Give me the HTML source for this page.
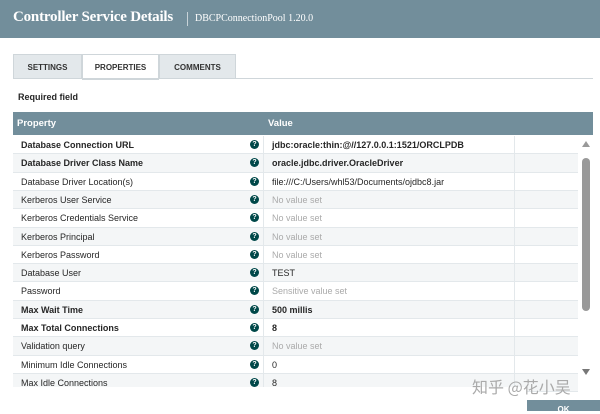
<!DOCTYPE html>
<html><head><style>
*{margin:0;padding:0;box-sizing:border-box}
body{width:600px;height:411px;overflow:hidden;background:#fff;font-family:"Liberation Sans",sans-serif;position:relative}
#hd{position:absolute;left:0;top:0;width:600px;height:38px;background:#728e9b;color:#fff}
#hd .t{position:absolute;left:13px;top:9px;font-family:"Liberation Serif",serif;font-weight:bold;font-size:15px;letter-spacing:-0.2px}
#hd .s{position:absolute;left:195px;top:13px;font-family:"Liberation Serif",serif;font-size:10px}
#hd .bar{position:absolute;left:187px;top:12px;width:1px;height:14px;background:#c8d3d8}
.tab{position:absolute;top:54px;height:25px;font-size:8px;font-weight:bold;color:#333;text-align:center;line-height:25px;background:#e3e8eb;border:1px solid #cfd6da}
#line{position:absolute;left:13px;top:78px;width:580px;height:1px;background:#cfd6da}
#rf{position:absolute;left:18px;top:92px;font-size:9px;font-weight:bold;color:#262626}
#th{position:absolute;left:13px;top:112px;width:580px;height:23px;background:#728e9b;color:#fff;font-size:9.5px;font-weight:bold}
.row{position:absolute;left:13px;width:565px;height:19px;border-bottom:1px solid #e3e8eb;font-size:9px;color:#262626}
.row span{position:absolute;top:4px}
.row .p{left:8px}.row .v{left:259px}
.row .q{left:237px;top:4px;width:9px;height:9px;border-radius:50%;background:#004849;color:#fff;font-size:7px;font-weight:bold;text-align:center;line-height:9px}
.row .d1{position:absolute;left:250px;top:0;width:1px;height:100%;background:#e3e8eb}
.row .d2{position:absolute;left:501px;top:0;width:1px;height:100%;background:#e3e8eb}
.b{font-weight:bold}.g{color:#aaa}
</style></head><body>
<div id="hd"><div class="t">Controller Service Details</div><div class="bar"></div><div class="s">DBCPConnectionPool 1.20.0</div></div>
<div class="tab" style="left:13px;width:69px">SETTINGS</div>
<div class="tab" style="left:82px;width:77px;background:#fff;height:26px">PROPERTIES</div>
<div class="tab" style="left:159px;width:77px">COMMENTS</div>
<div id="line"></div>
<div id="rf">Required field</div>
<div id="th"><span style="position:absolute;left:4px;top:6px">Property</span><span style="position:absolute;left:255px;top:6px">Value</span></div>
<div id="rows"></div>
<div style="position:absolute;left:582px;top:141px;width:0;height:0;border-left:4px solid transparent;border-right:4px solid transparent;border-bottom:6px solid #999"></div>
<div style="position:absolute;left:582px;top:158px;width:8px;height:153px;border-radius:4px;background:#999"></div>
<div style="position:absolute;left:582px;top:369px;width:0;height:0;border-left:4px solid transparent;border-right:4px solid transparent;border-top:6px solid #777"></div>
<script>
var d=[["Database Connection URL","jdbc:oracle:thin:@//127.0.0.1:1521/ORCLPDB",1,0],["Database Driver Class Name","oracle.jdbc.driver.OracleDriver",1,0],["Database Driver Location(s)","file:///C:/Users/whl53/Documents/ojdbc8.jar",0,0],["Kerberos User Service","No value set",0,1],["Kerberos Credentials Service","No value set",0,1],["Kerberos Principal","No value set",0,1],["Kerberos Password","No value set",0,1],["Database User","TEST",0,0],["Password","Sensitive value set",0,1],["Max Wait Time","500 millis",1,0],["Max Total Connections","8",1,0],["Validation query","No value set",0,1],["Minimum Idle Connections","0",0,0],["Max Idle Connections","8",0,0]];
var h="";d.forEach(function(r,i){var y=Math.round(136+i*18.3);var y2=Math.round(136+(i+1)*18.3);h+='<div class="row" style="top:'+y+'px;height:'+(y2-y)+'px;background:'+(i%2?'#f4f6f7':'#fff')+'"><div class="d1"></div><div class="d2"></div><span class="p'+(r[2]?' b':'')+'">'+r[0]+'</span><span class="q">?</span><span class="v'+(r[2]?' b':'')+(r[3]?' g':'')+'">'+r[1]+'</span></div>'});
document.getElementById("rows").innerHTML=h;
</script>
<div style="position:absolute;left:0;top:387px;width:527px;height:24px;background:#fff"></div>
<div style="position:absolute;left:472px;top:374px;font-size:16px;color:#aaa;font-family:'Noto Sans CJK SC',sans-serif">知乎 @花小吴</div>
<div style="position:absolute;left:527px;top:400px;width:73px;height:11px;background:#728e9b;color:#fff;font-size:8px;font-weight:bold;text-align:center;padding-top:5px">OK</div>
</body></html>
